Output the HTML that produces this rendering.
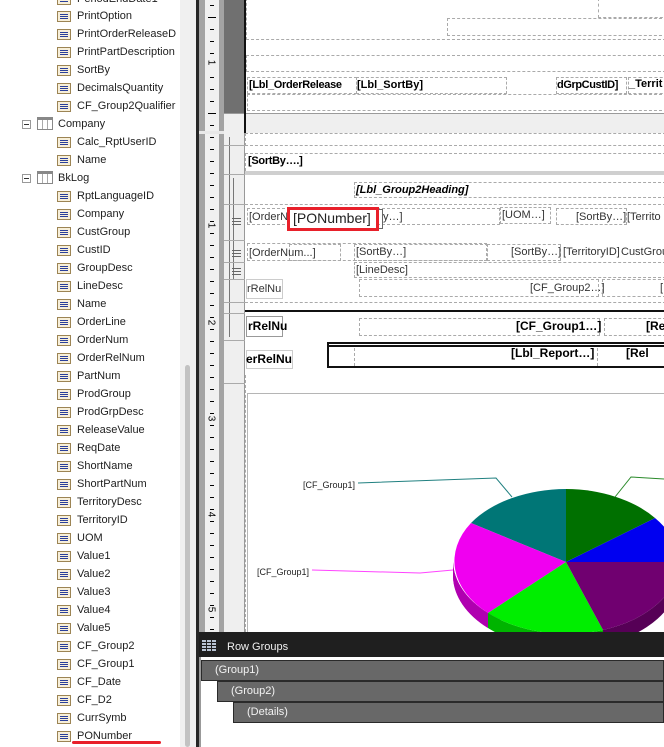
<!DOCTYPE html>
<html><head><meta charset="utf-8"><style>
*{margin:0;padding:0;box-sizing:border-box}
body{width:664px;height:747px;overflow:hidden;position:relative;background:#fff;font-family:"Liberation Sans",sans-serif;font-size:11px;color:#000}
.a{position:absolute}
.it{position:absolute;left:77px;font-size:11px;line-height:14px;color:#1e1e1e;white-space:nowrap}
.ic{position:absolute;left:57px;width:14px;height:11px;border:1px solid #9c8454;background:#f7efd9}
.ic:before{content:"";position:absolute;left:2px;top:2px;width:8px;height:1px;background:#2a3f9a;box-shadow:0 2px 0 #2a3f9a,0 4px 0 #2a3f9a}
.tb{position:absolute;left:37px;width:16px;height:13px;border:1px solid #888;background:repeating-linear-gradient(90deg,#fff 0 4px,#aaa 4px 5px),#fff}
.tb:after{content:"";position:absolute;left:0;right:0;top:0;height:2px;background:#888}
.mn{position:absolute;left:22px;width:9px;height:9px;border:1px solid #999;background:#fff}
.mn:after{content:"";position:absolute;left:1px;top:3px;width:5px;height:1px;background:#333}
.d{position:absolute;border:1px dashed #aaa}
.t{position:absolute;white-space:nowrap;font-size:11px;line-height:14px}
.b{font-weight:bold}
.tk{position:absolute;left:210px;width:4px;height:1px;background:#000}
.tk.m{left:208px;width:8px}
.num{position:absolute;left:205px;font-size:10px;transform:rotate(90deg);width:12px;text-align:center}
.rg{position:absolute;height:21px;right:0;background:#686868;border:1px solid #2a2a2a;color:#f2f2f2;font-size:11px;line-height:19px;padding-left:13px}
.ham{position:absolute;left:232px;width:9px;height:1px;background:#666;box-shadow:0 3px 0 #666,0 6px 0 #666}
</style></head><body>
<!-- left tree -->
<div class="a" style="left:0;top:0;width:180px;height:747px;background:#fff"></div>
<div class="ic" style="top:-6px"></div><div class="it" style="top:-8px">PeriodEndDate1</div>
<div class="ic" style="top:11px"></div><div class="it" style="top:9px">PrintOption</div>
<div class="ic" style="top:29px"></div><div class="it" style="top:27px">PrintOrderReleaseD</div>
<div class="ic" style="top:47px"></div><div class="it" style="top:45px">PrintPartDescription</div>
<div class="ic" style="top:65px"></div><div class="it" style="top:63px">SortBy</div>
<div class="ic" style="top:83px"></div><div class="it" style="top:81px">DecimalsQuantity</div>
<div class="ic" style="top:101px"></div><div class="it" style="top:99px">CF_Group2Qualifier</div>
<div class="mn" style="top:120px"></div><div class="tb" style="top:117px"></div><div class="it" style="top:117px;left:58px">Company</div>
<div class="ic" style="top:137px"></div><div class="it" style="top:135px">Calc_RptUserID</div>
<div class="ic" style="top:155px"></div><div class="it" style="top:153px">Name</div>
<div class="mn" style="top:174px"></div><div class="tb" style="top:171px"></div><div class="it" style="top:171px;left:58px">BkLog</div>
<div class="ic" style="top:191px"></div><div class="it" style="top:189px">RptLanguageID</div>
<div class="ic" style="top:209px"></div><div class="it" style="top:207px">Company</div>
<div class="ic" style="top:227px"></div><div class="it" style="top:225px">CustGroup</div>
<div class="ic" style="top:245px"></div><div class="it" style="top:243px">CustID</div>
<div class="ic" style="top:263px"></div><div class="it" style="top:261px">GroupDesc</div>
<div class="ic" style="top:281px"></div><div class="it" style="top:279px">LineDesc</div>
<div class="ic" style="top:299px"></div><div class="it" style="top:297px">Name</div>
<div class="ic" style="top:317px"></div><div class="it" style="top:315px">OrderLine</div>
<div class="ic" style="top:335px"></div><div class="it" style="top:333px">OrderNum</div>
<div class="ic" style="top:353px"></div><div class="it" style="top:351px">OrderRelNum</div>
<div class="ic" style="top:371px"></div><div class="it" style="top:369px">PartNum</div>
<div class="ic" style="top:389px"></div><div class="it" style="top:387px">ProdGroup</div>
<div class="ic" style="top:407px"></div><div class="it" style="top:405px">ProdGrpDesc</div>
<div class="ic" style="top:425px"></div><div class="it" style="top:423px">ReleaseValue</div>
<div class="ic" style="top:443px"></div><div class="it" style="top:441px">ReqDate</div>
<div class="ic" style="top:461px"></div><div class="it" style="top:459px">ShortName</div>
<div class="ic" style="top:479px"></div><div class="it" style="top:477px">ShortPartNum</div>
<div class="ic" style="top:497px"></div><div class="it" style="top:495px">TerritoryDesc</div>
<div class="ic" style="top:515px"></div><div class="it" style="top:513px">TerritoryID</div>
<div class="ic" style="top:533px"></div><div class="it" style="top:531px">UOM</div>
<div class="ic" style="top:551px"></div><div class="it" style="top:549px">Value1</div>
<div class="ic" style="top:569px"></div><div class="it" style="top:567px">Value2</div>
<div class="ic" style="top:587px"></div><div class="it" style="top:585px">Value3</div>
<div class="ic" style="top:605px"></div><div class="it" style="top:603px">Value4</div>
<div class="ic" style="top:623px"></div><div class="it" style="top:621px">Value5</div>
<div class="ic" style="top:641px"></div><div class="it" style="top:639px">CF_Group2</div>
<div class="ic" style="top:659px"></div><div class="it" style="top:657px">CF_Group1</div>
<div class="ic" style="top:677px"></div><div class="it" style="top:675px">CF_Date</div>
<div class="ic" style="top:695px"></div><div class="it" style="top:693px">CF_D2</div>
<div class="ic" style="top:713px"></div><div class="it" style="top:711px">CurrSymb</div>
<div class="ic" style="top:731px"></div><div class="it" style="top:729px">PONumber</div>
<div class="a" style="left:72px;top:741px;width:89px;height:3px;background:#e8202a;border-radius:2px"></div>
<!-- scrollbar -->
<div class="a" style="left:180px;top:0;width:16px;height:747px;background:#f0f0f0"></div>
<div class="a" style="left:185px;top:365px;width:5px;height:382px;background:#c2c2c2;border-radius:3px"></div>
<div class="a" style="left:196px;top:0;width:3px;height:747px;background:#262626"></div>
<!-- ruler -->
<div class="a" style="left:199px;top:0;width:6px;height:632px;background:#a3a3a3"></div>
<div class="a" style="left:205px;top:0;width:14px;height:632px;background:#f0f0f0"></div>
<div class="a" style="left:219px;top:0;width:5px;height:632px;background:#a3a3a3"></div>
<div class="a" style="left:199px;top:131px;width:25px;height:3px;background:#e8e8e8"></div>
<div id="ticks"></div>
<div class="num" style="top:57px">1</div>
<div class="num" style="top:220px">1</div>
<div class="num" style="top:317px">2</div>
<div class="num" style="top:413px">3</div>
<div class="num" style="top:509px">4</div>
<div class="num" style="top:604px">5</div>
<!-- handle column -->
<div class="a" style="left:224px;top:0;width:21px;height:113px;background:#707070"></div>
<div class="a" style="left:224px;top:113px;width:440px;height:20px;background:#efefef;border-top:1px solid #9a9a9a"></div>
<div class="a" style="left:244px;top:0;width:2px;height:133px;background:#111"></div>
<div class="a" style="left:224px;top:133px;width:21px;height:499px;background:#efefef"></div>
<div class="a" style="left:244px;top:133px;width:1px;height:499px;background:#999"></div>
<div class="a" style="left:229px;top:137px;width:1px;height:200px;background:#777"></div>
<div class="a" style="left:233px;top:178px;width:1px;height:102px;background:#777"></div>
<div class="a" style="left:224px;top:145px;width:21px;height:1px;background:#aaa"></div>
<div class="a" style="left:224px;top:174px;width:21px;height:1px;background:#aaa"></div>
<div class="a" style="left:224px;top:204px;width:21px;height:1px;background:#aaa"></div>
<div class="a" style="left:224px;top:240px;width:21px;height:1px;background:#aaa"></div>
<div class="a" style="left:224px;top:262px;width:21px;height:1px;background:#aaa"></div>
<div class="a" style="left:224px;top:279px;width:21px;height:1px;background:#aaa"></div>
<div class="a" style="left:224px;top:302px;width:21px;height:1px;background:#aaa"></div>
<div class="a" style="left:224px;top:313px;width:21px;height:1px;background:#aaa"></div>
<div class="a" style="left:224px;top:340px;width:21px;height:1px;background:#aaa"></div>
<div class="a" style="left:224px;top:383px;width:21px;height:1px;background:#aaa"></div>
<div class="ham" style="top:218px"></div><div class="ham" style="top:250px"></div><div class="ham" style="top:268px"></div>
<!-- top section -->
<div class="d" style="left:246px;top:-2px;width:420px;height:42px"></div>
<div class="d" style="left:598px;top:-2px;width:70px;height:20px;border-right:none"></div>
<div class="d" style="left:447px;top:18px;width:220px;height:18px"></div>
<div class="d" style="left:246px;top:55px;width:420px;height:17px"></div>
<div class="d" style="left:247px;top:77px;width:110px;height:17px"></div>
<div class="d" style="left:356px;top:77px;width:151px;height:17px"></div>
<div class="d" style="left:556px;top:77px;width:71px;height:17px"></div>
<div class="d" style="left:628px;top:77px;width:40px;height:17px"></div>
<div class="d" style="left:247px;top:94px;width:420px;height:17px"></div>
<div class="t b" style="left:249px;top:78px;letter-spacing:-0.3px">[Lbl_OrderRelease</div>
<div class="t b" style="left:357px;top:78px">[Lbl_SortBy]</div>
<div class="t b" style="left:557px;top:78px;letter-spacing:-0.4px">dGrpCustID]</div>
<div class="t b" style="left:629px;top:77px">_Territ</div>
<!-- section 2 -->
<div class="d" style="left:245px;top:133px;width:421px;height:13px"></div>
<div class="d" style="left:245px;top:153px;width:421px;height:18px;border-bottom:none"></div>
<div class="t b" style="left:248px;top:154px;letter-spacing:-0.3px">[SortBy….]</div>
<div class="a" style="left:245px;top:171px;width:419px;height:4px;background:#cfcfcf"></div>
<div class="d" style="left:354px;top:182px;width:312px;height:16px"></div>
<div class="t b" style="left:356px;top:183px;font-style:italic">[Lbl_Group2Heading]</div>
<div class="d" style="left:245px;top:204px;width:421px;height:1px;border-bottom:none"></div>
<div class="d" style="left:247px;top:208px;width:253px;height:17px"></div>
<div class="t" style="left:249px;top:210px;color:#333">[OrderNu</div>
<div class="t" style="left:383px;top:210px;color:#333">y…]</div>
<div class="d" style="left:500px;top:207px;width:51px;height:17px"></div>
<div class="t" style="left:502px;top:208px;color:#333">[UOM…]</div>
<div class="d" style="left:556px;top:208px;width:71px;height:17px"></div>
<div class="t" style="left:576px;top:210px;color:#333">[SortBy…]</div>
<div class="t" style="left:627px;top:210px;color:#333">[Territo</div>
<div class="a" style="left:287px;top:207px;width:92px;height:24px;border:3px solid #e8202a;background:#fff;font-size:14px;line-height:17px;padding-left:3px;color:#222">[PONumber]</div>
<div class="a" style="left:379px;top:209px;width:4px;height:20px;border:1px solid #666;border-left:none"></div>
<div class="d" style="left:247px;top:243px;width:240px;height:18px"></div>
<div class="d" style="left:289px;top:244px;width:52px;height:17px"></div>
<div class="t" style="left:249px;top:246px;color:#333">[OrderNum...]</div>
<div class="d" style="left:354px;top:244px;width:134px;height:17px"></div>
<div class="t" style="left:356px;top:245px;color:#333">[SortBy…]</div>
<div class="d" style="left:487px;top:244px;width:74px;height:17px"></div>
<div class="t" style="left:511px;top:245px;color:#333">[SortBy…]</div>
<div class="t" style="left:563px;top:245px;color:#333">[TerritoryID]</div>
<div class="t" style="left:621px;top:245px;color:#333">CustGrou</div>
<div class="d" style="left:354px;top:262px;width:312px;height:16px"></div>
<div class="t" style="left:356px;top:263px;color:#333">[LineDesc]</div>
<div class="a" style="left:246px;top:279px;width:37px;height:20px;border:1px solid #ccc"></div>
<div class="t" style="left:247px;top:282px;color:#333">rRelNu</div>
<div class="d" style="left:359px;top:279px;width:240px;height:18px"></div>
<div class="t" style="left:530px;top:281px;color:#333">[CF_Group2…]</div>
<div class="d" style="left:602px;top:279px;width:64px;height:18px"></div>
<div class="t" style="left:660px;top:281px;color:#333">[</div>
<div class="d" style="left:245px;top:302px;width:421px;height:1px;border-bottom:none"></div>
<div class="a" style="left:245px;top:310px;width:419px;height:2px;background:#111"></div>
<div class="a" style="left:246px;top:316px;width:37px;height:21px;border:1px solid #999"></div>
<div class="t b" style="left:248px;top:319px;font-size:12px">rRelNu</div>
<div class="d" style="left:359px;top:318px;width:241px;height:18px"></div>
<div class="t b" style="left:516px;top:319px;font-size:12px">[CF_Group1…]</div>
<div class="d" style="left:604px;top:318px;width:62px;height:18px"></div>
<div class="t b" style="left:646px;top:319px;font-size:12px">[Re</div>
<div class="a" style="left:327px;top:342px;width:337px;height:2px;background:#111"></div>
<div class="a" style="left:327px;top:345px;width:337px;height:2px;background:#111"></div>
<div class="a" style="left:327px;top:366px;width:337px;height:2px;background:#111"></div>
<div class="a" style="left:327px;top:342px;width:2px;height:26px;background:#111"></div>
<div class="d" style="left:354px;top:348px;width:244px;height:18px;border-top:none;border-bottom:none"></div>
<div class="a" style="left:246px;top:350px;width:47px;height:19px;border:1px solid #ccc"></div>
<div class="t b" style="left:246px;top:352px;font-size:12px">erRelNu</div>
<div class="t b" style="left:511px;top:346px;font-size:12px">[Lbl_Report…]</div>
<div class="t b" style="left:626px;top:346px;font-size:12px">[Rel</div>
<div class="d" style="left:245px;top:375px;width:2px;height:257px;border-right:none;border-top:none;border-bottom:none"></div>
<div class="a" style="left:247px;top:393px;width:417px;height:1px;background:#b5b5b5"></div>
<div class="a" style="left:247px;top:393px;width:1px;height:239px;background:#b5b5b5"></div>
<!-- chart -->
<svg class="a" style="left:0;top:0" width="664" height="632" viewBox="0 0 664 632">
<g>
<path d="M566,577 L488,628 A113,73 0 0 1 453,577 L453,562 A113,73 0 0 0 488,613 Z" fill="#b100b1"/>
<path d="M453,562 L453,577 A113,73 0 0 0 488,628 L488,613 A113,73 0 0 1 453,562Z" fill="#b000b0"/>
<path d="M488,613 L488,628 A113,73 0 0 0 603,645 L603,630 A113,73 0 0 1 488,613Z" fill="#00b400"/>
<path d="M603,630 L603,645 A113,73 0 0 0 679,577 L679,562 A113,73 0 0 1 603,630Z" fill="#560056"/>
</g>
<path d="M566,562 L566,489 A113,73 0 0 0 471,523 Z" fill="#007676"/>
<path d="M566,562 L471,523 A113,73 0 0 0 488,613 Z" fill="#f000f0"/>
<path d="M566,562 L488,613 A113,73 0 0 0 603,630 Z" fill="#00ee00"/>
<path d="M566,562 L603,630 A113,73 0 0 0 679,562 Z" fill="#700070"/>
<path d="M566,562 L679,562 A113,73 0 0 0 655,518 Z" fill="#0000f0"/>
<path d="M566,562 L655,518 A113,73 0 0 0 566,489 Z" fill="#007000"/>
<polyline points="358,483 496,478 512,497" fill="none" stroke="#208080" stroke-width="1"/>
<polyline points="312,570 420,573 453,570" fill="none" stroke="#ff44ff" stroke-width="1"/>
<polyline points="615,497 631,477 664,479" fill="none" stroke="#2a8a2a" stroke-width="1"/>
<text x="303" y="488" font-family="Liberation Sans" font-size="9" fill="#222">[CF_Group1]</text>
<text x="257" y="575" font-family="Liberation Sans" font-size="9" fill="#222">[CF_Group1]</text>
</svg>
<!-- bottom panel -->
<div class="a" style="left:199px;top:632px;width:465px;height:25px;background:#1f1f1f"></div>
<div class="a" style="left:202px;top:639px;width:15px;height:12px;background:repeating-linear-gradient(90deg,#b9c4d4 0 4px,#1f1f1f 4px 5px);"></div>
<div class="a" style="left:202px;top:639px;width:15px;height:12px;background:repeating-linear-gradient(0deg,transparent 0 2px,#1f1f1f 2px 3px)"></div>
<div class="t" style="left:227px;top:640px;color:#f0f0f0">Row Groups</div>
<div class="a" style="left:199px;top:657px;width:465px;height:90px;background:#fff;border-left:2px solid #999"></div>
<div class="rg" style="left:201px;top:660px">(Group1)</div>
<div class="rg" style="left:217px;top:681px">(Group2)</div>
<div class="rg" style="left:233px;top:702px">(Details)</div>
<script>
var h='';for(var y=-31;y<632;y+=12){if(y<0||(y>128&&y<136))continue;var k=((y+31)%96+96)%96;if(y>=136)k=(y-132)%96;if(k===0)continue;h+='<div class="tk'+(k===48?' m':'')+'" style="top:'+y+'px"></div>';}
document.getElementById('ticks').innerHTML=h;
</script>
</body></html>
